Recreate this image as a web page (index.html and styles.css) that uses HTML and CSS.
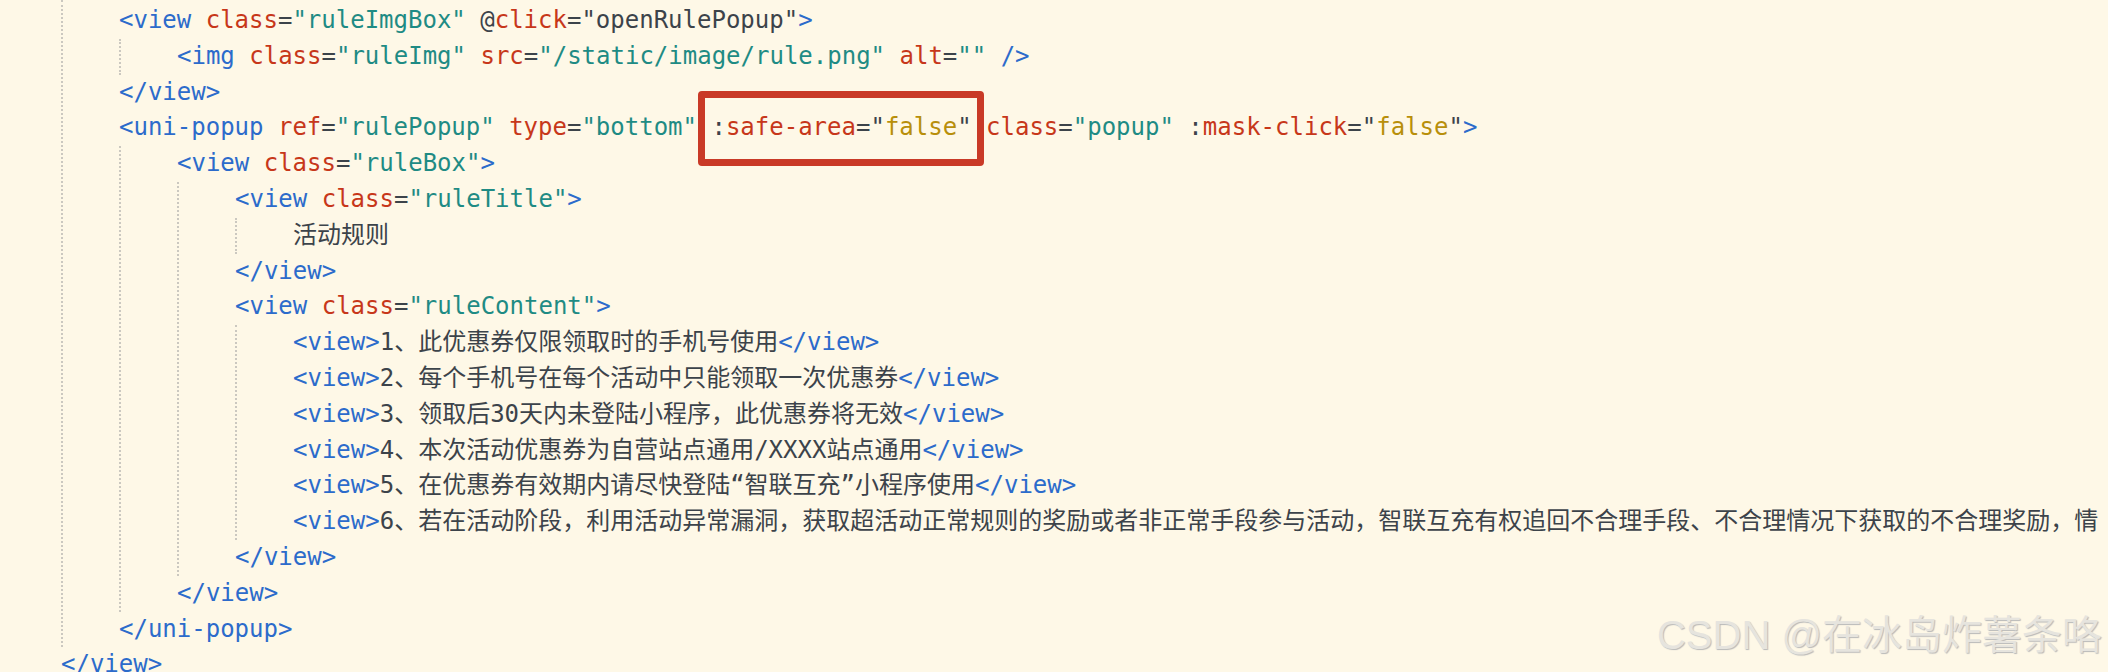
FILE: index.html
```html
<!DOCTYPE html>
<html>
<head>
    <meta charset="utf-8">
    <title>rule popup</title>
    <link rel="stylesheet" href="styles.css">
</head>
<body>
    <div class="code">
        <div class="blk top">
            <div class="ln"><span class="t">&lt;view</span> <span class="a">class</span><span class="p">=</span><span class="s">"ruleImgBox"</span> <span class="p">@</span><span class="a">click</span><span class="p">="openRulePopup"</span><span class="t">&gt;</span></div>
            <div class="blk">
                <div class="ln"><span class="t">&lt;img</span> <span class="a">class</span><span class="p">=</span><span class="s">"ruleImg"</span> <span class="a">src</span><span class="p">=</span><span class="s">"/static/image/rule.png"</span> <span class="a">alt</span><span class="p">=</span><span class="s">""</span> <span class="t">/&gt;</span></div>
            </div>
            <div class="ln"><span class="t">&lt;/view&gt;</span></div>
            <div class="ln"><span class="t">&lt;uni-popup</span> <span class="a">ref</span><span class="p">=</span><span class="s">"rulePopup"</span> <span class="a">type</span><span class="p">=</span><span class="s">"bottom"</span> <span class="mark"><span class="p">:</span><span class="a">safe-area</span><span class="p">="</span><span class="b">false</span><span class="p">"</span></span> <span class="a">class</span><span class="p">=</span><span class="s">"popup"</span> <span class="p">:</span><span class="a">mask-click</span><span class="p">="</span><span class="b">false</span><span class="p">"</span><span class="t">&gt;</span></div>
            <div class="blk">
                <div class="ln"><span class="t">&lt;view</span> <span class="a">class</span><span class="p">=</span><span class="s">"ruleBox"</span><span class="t">&gt;</span></div>
                <div class="blk">
                    <div class="ln"><span class="t">&lt;view</span> <span class="a">class</span><span class="p">=</span><span class="s">"ruleTitle"</span><span class="t">&gt;</span></div>
                    <div class="blk">
                        <div class="ln"><span class="p">活动规则</span></div>
                    </div>
                    <div class="ln"><span class="t">&lt;/view&gt;</span></div>
                    <div class="ln"><span class="t">&lt;view</span> <span class="a">class</span><span class="p">=</span><span class="s">"ruleContent"</span><span class="t">&gt;</span></div>
                    <div class="blk">
                        <div class="ln"><span class="t">&lt;view&gt;</span><span class="p">1、此优惠券仅限领取时的手机号使用</span><span class="t">&lt;/view&gt;</span></div>
                        <div class="ln"><span class="t">&lt;view&gt;</span><span class="p">2、每个手机号在每个活动中只能领取一次优惠券</span><span class="t">&lt;/view&gt;</span></div>
                        <div class="ln"><span class="t">&lt;view&gt;</span><span class="p">3、领取后30天内未登陆小程序，此优惠券将无效</span><span class="t">&lt;/view&gt;</span></div>
                        <div class="ln"><span class="t">&lt;view&gt;</span><span class="p">4、本次活动优惠券为自营站点通用/XXXX站点通用</span><span class="t">&lt;/view&gt;</span></div>
                        <div class="ln"><span class="t">&lt;view&gt;</span><span class="p">5、在优惠券有效期内请尽快登陆“智联互充”小程序使用</span><span class="t">&lt;/view&gt;</span></div>
                        <div class="ln"><span class="t">&lt;view&gt;</span><span class="p">6、若在活动阶段，利用活动异常漏洞，获取超活动正常规则的奖励或者非正常手段参与活动，智联互充有权追回不合理手段、不合理情况下获取的不合理奖励，情</span></div>
                    </div>
                    <div class="ln"><span class="t">&lt;/view&gt;</span></div>
                </div>
                <div class="ln"><span class="t">&lt;/view&gt;</span></div>
            </div>
            <div class="ln"><span class="t">&lt;/uni-popup&gt;</span></div>
        </div>
        <div class="ln"><span class="t">&lt;/view&gt;</span></div>
    </div>
    <div class="wm">CSDN @在冰岛炸薯条咯</div>
</body>
</html>
```

FILE: styles.css
```css
* {
    box-sizing: border-box;
    margin: 0px;
    padding: 0px;
}

body {
    background: #fef8e7;
    width: 2108px;
    height: 672px;
    overflow: hidden;
    position: relative;
}

.code {
    padding-left: 61px;
    font-family: "DejaVu Sans Mono", "Noto Sans CJK SC", monospace;
    font-size: 24px;
    line-height: 35.8px;
    color: #3c434a;
}

.blk {
    border-left: 2px dotted #cbc8c0;
    padding-left: 56px;
}

.top {
    padding-top: 3px;
}

.ln {
    height: 35.8px;
    white-space: pre;
}

/* token colours */
.t { color: #2c6bcb; }
.a { color: #c7371a; }
.s { color: #1f8b84; }
.b { color: #b88f0b; }
.p { color: #3c434a; }

.mark {
    position: relative;
}

.mark::after {
    content: "";
    position: absolute;
    left: -13px;
    right: -12px;
    top: -22px;
    bottom: -25px;
    border: 7px solid #c93a27;
    border-radius: 4px;
}

.wm {
    position: absolute;
    right: 6px;
    bottom: 13px;
    font-family: "Liberation Sans", "Noto Sans CJK SC", sans-serif;
    font-size: 40px;
    line-height: 48px;
    color: #e6e4de;
    text-shadow: 1px 1px 1px #b9b9b9;
}
```
